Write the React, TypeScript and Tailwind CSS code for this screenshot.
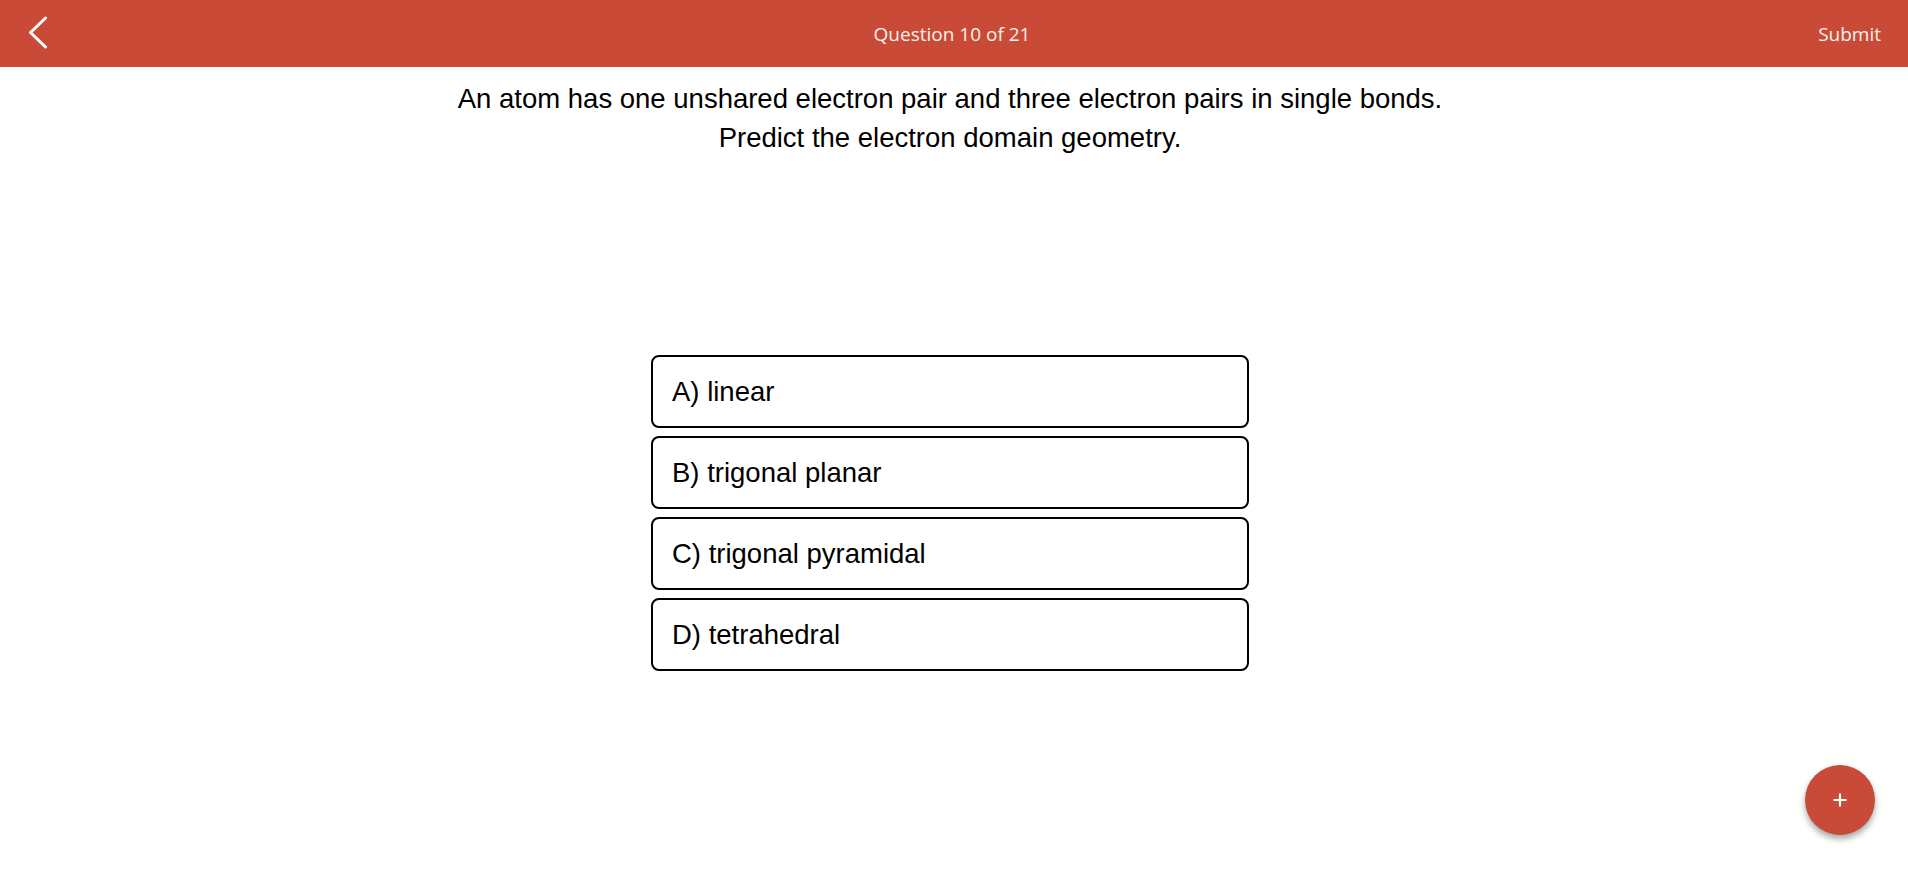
import React from "react";

const options = ["A) linear", "B) trigonal planar", "C) trigonal pyramidal", "D) tetrahedral"];

export default function App() {
  return (
    <div className="relative min-h-[870px] w-full bg-white">
      <header className="grid h-[67px] grid-cols-[1fr_auto_1fr] items-center bg-[#c94a37] px-[27px] text-[#fdf1ec]" style={{ fontFamily: '"Open Sans", "Noto Sans", sans-serif' }}>
        <button className="-mt-[2px] flex h-[40px] w-[40px] items-center justify-start pl-[1px]">
          <svg width="20" height="33" viewBox="0 0 20 33" fill="none">
            <path d="M17.5 2 L2.5 16.5 L17.5 31" stroke="#ffffff" strokeWidth="3" strokeLinecap="round" strokeLinejoin="round" />
          </svg>
        </button>
        <div className="pr-[4px] pt-[1px] text-[19px] font-medium">Question 10 of 21</div>
        <div className="justify-self-end pt-[1px] text-[19px] font-medium">Submit</div>
      </header>
      <main className="flex flex-col items-center pr-[8px]" style={{ fontFamily: '"Liberation Sans", Arial, sans-serif' }}>
        <div className="mt-[12px] text-center text-[27.5px] leading-[39px] text-black">
          <p>An atom has one unshared electron pair and three electron pairs in single bonds.</p>
          <p>Predict the electron domain geometry.</p>
        </div>
        <div className="mt-[198px] flex w-[598px] flex-col gap-[8px]">
          {options.map((o) => (
            <button key={o} className="flex h-[73px] items-center rounded-[8px] border-2 border-black bg-white pl-[19px] text-left text-[27.5px] text-black">
              {o}
            </button>
          ))}
        </div>
      </main>
      <button className="absolute bottom-[35px] right-[33px] flex h-[70px] w-[70px] items-center justify-center rounded-full bg-[#c94a37] shadow-[0_4px_6px_rgba(0,0,0,0.35)]">
        <svg width="16" height="16" viewBox="0 0 16 16">
          <path d="M8 1.5 V14.5 M1.5 8 H14.5" stroke="#ffffff" strokeWidth="2.2" />
        </svg>
      </button>
    </div>
  );
}
